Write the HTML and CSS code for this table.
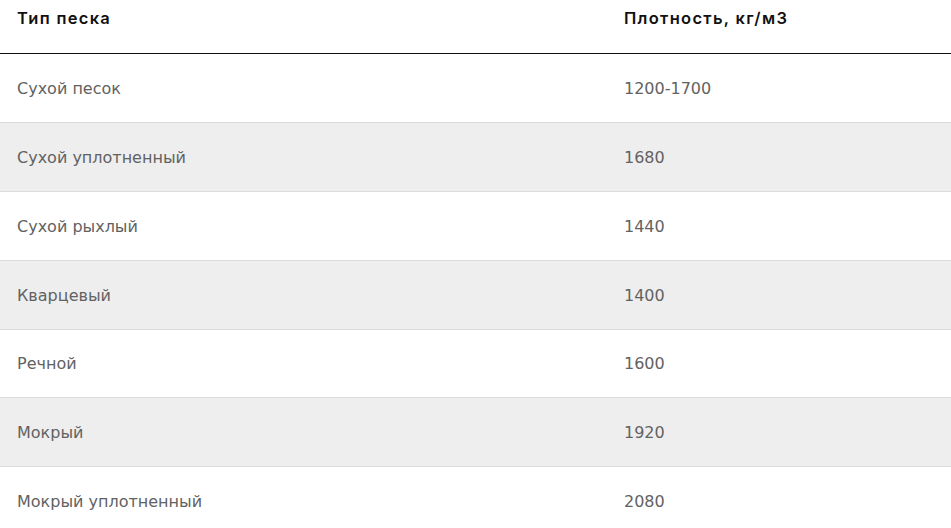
FILE: index.html
```html
<!DOCTYPE html>
<html lang="ru">
<head>
<meta charset="utf-8">
<link rel="stylesheet" href="styles.css">
</head>
<body>
<table class="sand">
  <thead>
    <tr><th class="c1">Тип песка</th><th class="c2">Плотность, кг/м3</th></tr>
  </thead>
  <tbody>
    <tr><td>Сухой песок</td><td>1200-1700</td></tr>
    <tr class="alt"><td>Сухой уплотненный</td><td>1680</td></tr>
    <tr><td>Сухой рыхлый</td><td>1440</td></tr>
    <tr class="alt"><td>Кварцевый</td><td>1400</td></tr>
    <tr><td>Речной</td><td>1600</td></tr>
    <tr class="alt"><td>Мокрый</td><td>1920</td></tr>
    <tr><td>Мокрый уплотненный</td><td>2080</td></tr>
  </tbody>
</table>
</body>
</html>
```
FILE: styles.css
```css
html, body {
  margin: 0;
  padding: 0;
  background: #ffffff;
}
.sand {
  width: 951px;
  border-collapse: collapse;
  table-layout: fixed;
}
.sand th {
  text-align: left;
  font-family: "Inter", "Noto Sans", sans-serif;
  font-weight: 600;
  font-size: 16.5px;
  letter-spacing: 1.3px;
  color: #111111;
  line-height: 24px;
  height: 24px;
  padding: 6px 17px 23px;
  border-bottom: 1px solid #111111;
}
.sand .c1 { width: 573px; }
.sand td {
  font-family: "DejaVu Sans", "Noto Sans", sans-serif;
  font-weight: 400;
  font-size: 16px;
  color: #626262;
  line-height: 24px;
  height: 24px;
  padding: 22.9px 17px 21px;
  border-bottom: 1px solid #dcdcdc;
}
.sand tr.alt td {
  background: #eeeeee;
}
.sand tbody tr:last-child td {
  border-bottom: none;
}
```
